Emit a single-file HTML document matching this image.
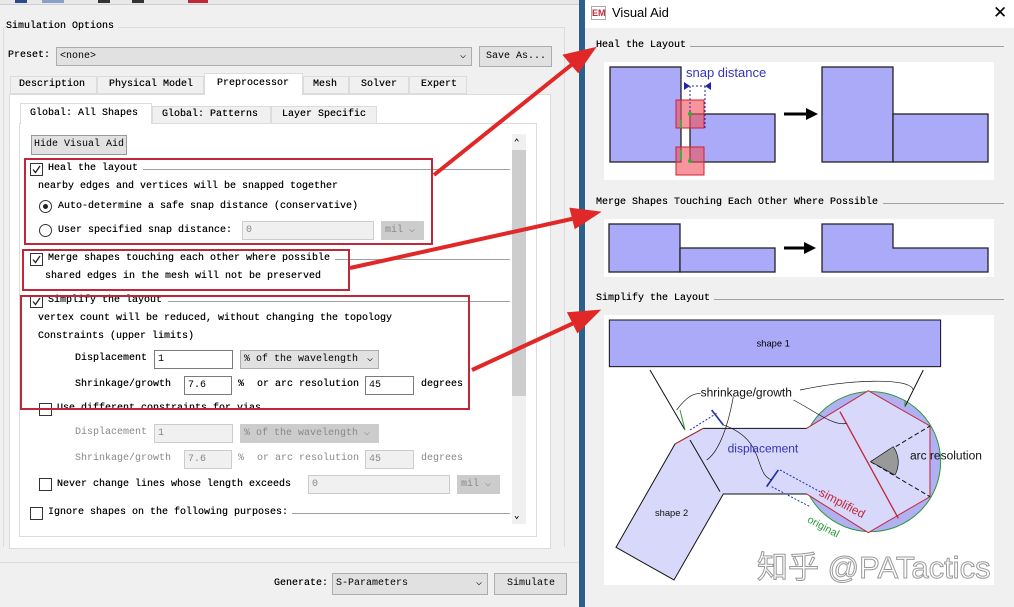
<!DOCTYPE html>
<html><head><meta charset="utf-8"><style>
body{margin:0;width:1014px;height:607px;overflow:hidden;background:#f0f0f0;font-family:"Liberation Mono","Noto Serif CJK SC",monospace;font-size:10px;color:#000;position:relative}
.a{position:absolute;white-space:nowrap}
.t{position:absolute;white-space:nowrap;line-height:12px;text-shadow:0 0 0.3px #000}
.box{position:absolute;box-sizing:border-box}
.cb{position:absolute;width:13px;height:13px;border:1px solid #333;background:#fff;box-sizing:border-box}
.rd{position:absolute;width:13px;height:13px;border:1px solid #333;border-radius:50%;background:#fff;box-sizing:border-box}
.in{position:absolute;box-sizing:border-box;border:1px solid #7a7a7a;background:#fff;padding-left:3px;line-height:17px}
.dis{border-color:#ccc;background:#f0f0f0;color:#888}
.cmb{position:absolute;box-sizing:border-box;border:1px solid #adadad;background:#e1e1e1;padding-left:3px;line-height:17px}
.g{color:#888;text-shadow:none}
.ln{position:absolute;height:1px;background:#a0a0a0}
.red{position:absolute;box-sizing:border-box;border:2px solid #c0283a}
.ck{position:absolute;width:13px;height:13px}
</style></head><body>
<div class="box" style="left:0;top:0;width:579px;height:607px;background:#f0f0f0"></div>
<div class="box" style="left:0;top:0;width:579px;height:5px;background:#e8e8e8;border-bottom:1px solid #cfcfcf"></div>
<div class="box" style="left:15px;top:0;width:12px;height:3px;background:#2a4a8a"></div>
<div class="box" style="left:42px;top:0;width:22px;height:3px;background:#8aa0c8"></div>
<div class="box" style="left:98px;top:0;width:12px;height:3px;background:#333"></div>
<div class="box" style="left:132px;top:0;width:12px;height:3px;background:#333"></div>
<div class="box" style="left:188px;top:0;width:20px;height:3px;background:#c0283a"></div>
<div class="box" style="left:3px;top:27px;width:562px;height:520px;border:1px solid #dcdcdc;border-bottom:none"></div>
<div class="t" style="left:6px;top:21px;background:#f0f0f0;padding-right:4px">Simulation Options</div>
<div class="t" style="left:8px;top:50px">Preset:</div>
<div class="cmb" style="left:56px;top:47px;width:416px;height:19px">&lt;none&gt;<span class="a" style="right:5px;top:0">⌵</span></div>
<div class="cmb" style="left:479px;top:46px;width:73px;height:21px;line-height:19px;padding-left:6px">Save As...</div>
<div class="box" style="left:9px;top:94px;width:542px;height:455px;border:1px solid #dcdcdc;background:#fff"></div>
<div class="box" style="left:10px;top:76px;width:87px;height:18px;border:1px solid #dcdcdc;background:#f0f0f0"></div><div class="t" style="left:19px;top:79px">Description</div>
<div class="box" style="left:97px;top:76px;width:107px;height:18px;border:1px solid #dcdcdc;background:#f0f0f0"></div><div class="t" style="left:109px;top:79px">Physical Model</div>
<div class="box" style="left:204px;top:73px;width:99px;height:22px;border:1px solid #dcdcdc;border-bottom:none;background:#fff"></div><div class="t" style="left:217px;top:78px">Preprocessor</div>
<div class="box" style="left:303px;top:76px;width:46px;height:18px;border:1px solid #dcdcdc;background:#f0f0f0"></div><div class="t" style="left:313px;top:79px">Mesh</div>
<div class="box" style="left:349px;top:76px;width:60px;height:18px;border:1px solid #dcdcdc;background:#f0f0f0"></div><div class="t" style="left:361px;top:79px">Solver</div>
<div class="box" style="left:409px;top:76px;width:58px;height:18px;border:1px solid #dcdcdc;background:#f0f0f0"></div><div class="t" style="left:421px;top:79px">Expert</div>
<div class="box" style="left:19px;top:123px;width:518px;height:414px;border:1px solid #dcdcdc;background:#fff"></div>
<div class="box" style="left:20px;top:103px;width:132px;height:21px;border:1px solid #dcdcdc;border-bottom:none;background:#fff"></div><div class="t" style="left:30px;top:108px">Global: All Shapes</div>
<div class="box" style="left:152px;top:106px;width:119px;height:18px;border:1px solid #dcdcdc;background:#f0f0f0"></div><div class="t" style="left:162px;top:109px">Global: Patterns</div>
<div class="box" style="left:271px;top:106px;width:106px;height:18px;border:1px solid #dcdcdc;background:#f0f0f0"></div><div class="t" style="left:282px;top:109px">Layer Specific</div>
<div class="cmb" style="left:31px;top:135px;width:96px;height:20px;line-height:18px;padding-left:2px;border-color:#999">Hide Visual Aid</div>
<div class="box" style="left:512px;top:134px;width:14px;height:390px;background:#f0f0f0"></div>
<div class="box" style="left:512px;top:150px;width:14px;height:246px;background:#cdcdcd"></div>
<div class="t" style="left:514px;top:137px;font-size:9px">⌃</div>
<div class="t" style="left:514px;top:510px;font-size:9px">⌄</div>
<div class="cb" style="left:30px;top:163px"></div><svg class="ck" style="left:30px;top:163px"><path d="M3 6.5L5.5 9.5 10 3" stroke="#222" stroke-width="1.3" fill="none"/></svg>
<div class="t" style="left:48px;top:163px">Heal the layout</div>
<div class="ln" style="left:143px;top:169px;width:367px"></div>
<div class="t" style="left:38px;top:181px">nearby edges and vertices will be snapped together</div>
<div class="rd" style="left:39px;top:200px"></div><div class="box" style="left:43px;top:204px;width:5px;height:5px;border-radius:50%;background:#222"></div>
<div class="t" style="left:58px;top:201px">Auto-determine a safe snap distance (conservative)</div>
<div class="rd" style="left:39px;top:224px"></div>
<div class="t" style="left:58px;top:225px">User specified snap distance:</div>
<div class="in dis" style="left:242px;top:221px;width:132px;height:19px">0</div>
<div class="cmb g" style="left:381px;top:221px;width:43px;height:19px;background:#ccc;border-color:#ccc">mil ⌵</div>
<div class="cb" style="left:30px;top:253px"></div><svg class="ck" style="left:30px;top:253px"><path d="M3 6.5L5.5 9.5 10 3" stroke="#222" stroke-width="1.3" fill="none"/></svg>
<div class="t" style="left:48px;top:253px">Merge shapes touching each other where possible</div>
<div class="ln" style="left:335px;top:259px;width:175px"></div>
<div class="t" style="left:45px;top:271px">shared edges in the mesh will not be preserved</div>
<div class="cb" style="left:30px;top:295px"></div><svg class="ck" style="left:30px;top:295px"><path d="M3 6.5L5.5 9.5 10 3" stroke="#222" stroke-width="1.3" fill="none"/></svg>
<div class="t" style="left:48px;top:295px">Simplify the layout</div>
<div class="ln" style="left:168px;top:301px;width:342px"></div>
<div class="t" style="left:38px;top:313px">vertex count will be reduced, without changing the topology</div>
<div class="t" style="left:38px;top:331px">Constraints (upper limits)</div>
<div class="t" style="left:75px;top:353px">Displacement</div>
<div class="in" style="left:154px;top:350px;width:79px;height:19px">1</div>
<div class="cmb" style="left:240px;top:350px;width:139px;height:19px">% of the wavelength <span class="a" style="right:5px;top:0">⌵</span></div>
<div class="t" style="left:75px;top:379px">Shrinkage/growth</div>
<div class="in" style="left:184px;top:376px;width:48px;height:19px">7.6</div>
<div class="t" style="left:238px;top:379px">%</div>
<div class="t" style="left:257px;top:379px">or arc resolution</div>
<div class="in" style="left:365px;top:376px;width:49px;height:19px">45</div>
<div class="t" style="left:421px;top:379px">degrees</div>
<div class="cb" style="left:39px;top:403px"></div>
<div class="t" style="left:57px;top:403px">Use different constraints for vias</div>
<div class="t g" style="left:75px;top:427px">Displacement</div>
<div class="in dis" style="left:154px;top:424px;width:79px;height:19px">1</div>
<div class="cmb g" style="left:240px;top:424px;width:139px;height:19px;background:#ccc;border-color:#ccc">% of the wavelength ⌵</div>
<div class="t g" style="left:75px;top:453px">Shrinkage/growth</div>
<div class="in dis" style="left:184px;top:450px;width:48px;height:19px">7.6</div>
<div class="t g" style="left:238px;top:453px">%</div>
<div class="t g" style="left:257px;top:453px">or arc resolution</div>
<div class="in dis" style="left:365px;top:450px;width:49px;height:19px">45</div>
<div class="t g" style="left:421px;top:453px">degrees</div>
<div class="cb" style="left:39px;top:478px"></div>
<div class="t" style="left:57px;top:479px">Never change lines whose length exceeds</div>
<div class="in dis" style="left:308px;top:475px;width:142px;height:19px">0</div>
<div class="cmb g" style="left:457px;top:475px;width:43px;height:19px;background:#ccc;border-color:#ccc">mil ⌵</div>
<div class="cb" style="left:30px;top:507px"></div>
<div class="t" style="left:48px;top:507px">Ignore shapes on the following purposes:</div>
<div class="ln" style="left:292px;top:513px;width:218px"></div>
<div class="red" style="left:24px;top:158px;width:409px;height:87px"></div>
<div class="red" style="left:22px;top:249px;width:328px;height:42px"></div>
<div class="red" style="left:20px;top:295px;width:450px;height:115px"></div>
<div class="ln" style="left:0;top:562px;width:579px;background:#dcdcdc"></div>
<div class="t" style="left:274px;top:578px">Generate:</div>
<div class="cmb" style="left:332px;top:573px;width:156px;height:22px;line-height:20px">S-Parameters<span class="a" style="right:5px;top:0">⌵</span></div>
<div class="cmb" style="left:494px;top:573px;width:73px;height:22px;line-height:20px;padding-left:12px">Simulate</div>
<div class="box" style="left:579px;top:0;width:6px;height:607px;background:#2c5f8a"></div>
<div class="box" style="left:585px;top:0;width:429px;height:28px;background:#fff"></div>
<div class="box" style="left:591px;top:6px;width:15px;height:14px;border:1px solid #aaa;background:#fff;color:#c0283a;font:bold 9px 'Liberation Sans',sans-serif;line-height:12px;text-align:center">EM</div>
<div class="a" style="left:612px;top:5px;font:13px 'Liberation Sans',sans-serif">Visual Aid</div>
<div class="a" style="left:993px;top:3px;font:17px 'Liberation Sans',sans-serif">✕</div>
<div class="t" style="left:596px;top:40px">Heal the Layout</div><div class="ln" style="left:690px;top:46px;width:314px"></div>
<div class="t" style="left:596px;top:197px">Merge Shapes Touching Each Other Where Possible</div><div class="ln" style="left:883px;top:203px;width:121px"></div>
<div class="t" style="left:596px;top:293px">Simplify the Layout</div><div class="ln" style="left:714px;top:299px;width:290px"></div>
<svg class="a" style="left:0;top:0" width="1014" height="607" viewBox="0 0 1014 607" font-family="Liberation Sans, sans-serif">
<rect x="604" y="62" width="390" height="118" fill="#fff"/>
<rect x="610" y="67" width="71" height="95" fill="#aaaaf8" stroke="#222" stroke-width="1.3"/>
<rect x="690" y="114" width="85" height="48" fill="#aaaaf8" stroke="#222" stroke-width="1.3"/>
<line x1="690" y1="114" x2="690" y2="162" stroke="#222"/>
<rect x="676" y="100" width="28" height="28" fill="rgba(240,80,90,0.6)" stroke="#d02030"/>
<rect x="676" y="147" width="28" height="28" fill="rgba(240,80,90,0.6)" stroke="#d02030"/>
<path d="M681 120V128M681 150V160" stroke="#4a4" stroke-width="2"/>
<circle cx="690" cy="114" r="2" fill="#3a3"/><circle cx="690" cy="161" r="2" fill="#3a3"/>
<path d="M684 86H705M690 86V114M705 86V128" stroke="#22a" stroke-dasharray="2 2" fill="none"/>
<path d="M684 82L690 86 684 90ZM711 82L705 86 711 90Z" fill="#22a"/>
<text x="686" y="77" font-size="13" fill="#3333bb">snap distance</text>
<path d="M784 114H808" stroke="#000" stroke-width="3"/><path d="M806 108L818 114 806 120Z" fill="#000"/>
<rect x="822" y="67" width="71" height="95" fill="#aaaaf8" stroke="#222" stroke-width="1.3"/>
<rect x="893" y="114" width="95" height="48" fill="#aaaaf8" stroke="#222" stroke-width="1.3"/>
<rect x="604" y="219" width="390" height="58" fill="#fff"/>
<rect x="609" y="224" width="71" height="48" fill="#aaaaf8" stroke="#222" stroke-width="1.3"/>
<rect x="680" y="248" width="95" height="24" fill="#aaaaf8" stroke="#222" stroke-width="1.3"/>
<path d="M784 248H806" stroke="#000" stroke-width="3"/><path d="M804 242L816 248 804 254Z" fill="#000"/>
<path d="M822 224H893V248H988V272H822Z" fill="#aaaaf8" stroke="#222" stroke-width="1.3"/>
<rect x="604" y="315" width="390" height="270" fill="#fff"/>
<g transform="translate(580,300) scale(0.3333)">
<rect x="88" y="60" width="994" height="140" fill="#aaaaf8" stroke="#111" stroke-width="3"/>
<text x="530" y="140" font-size="28">shape 1</text>
<circle cx="872" cy="485" r="210" fill="#b0b0f2" stroke="#2a9a3a" stroke-width="3"/>
<path d="M108 742L285 432 370 385H680L865 272 1050 378V590L865 698 680 582H430L282 840Z" fill="#d8d8fa"/>
<path d="M680 385L865 272 1050 378V590L865 698 680 582" fill="none" stroke="#c0283a" stroke-width="3"/>
<path d="M680 385H370L285 432 108 742 282 840 430 582H680" fill="none" stroke="#111" stroke-width="3"/>
<path d="M285 432L370 385" stroke="#c0283a" stroke-width="3"/>
<path d="M872 485L1050 378M872 485L1050 590" stroke="#111" stroke-width="3" stroke-dasharray="14 8"/>
<path d="M872 485L940 440A80 80 0 0 1 945 525Z" fill="#999" stroke="#111" stroke-width="2"/>
<path d="M780 335L955 655" stroke="#c0283a" stroke-width="4"/>
<path d="M210 210L315 390M1030 210L975 320M330 420L420 575" stroke="#111" stroke-width="3"/>
<path d="M300 330L315 390M975 300L975 320" stroke="#2a9a3a" stroke-width="3"/>
<path d="M330 390L410 340M575 560L690 620M600 510L720 575" stroke="#2233aa" stroke-width="3" stroke-dasharray="6 5"/>
<path d="M395 330L430 375M560 560L595 510" stroke="#2233aa" stroke-width="5"/>
<path d="M290 330C320 290 340 280 362 280M660 270C800 240 990 230 1000 270M640 300C700 330 760 380 800 370M460 290C440 400 410 460 380 480M430 375C560 420 520 520 575 540" fill="none" stroke="#111" stroke-width="2"/>
<text x="362" y="290" font-size="36" fill="#111">shrinkage/growth</text>
<text x="443" y="457" font-size="36" fill="#3333bb">displacement</text>
<text x="990" y="478" font-size="36" fill="#111">arc resolution</text>
<text x="715" y="585" font-size="36" fill="#c0283a" transform="rotate(28 715 585)">simplified</text>
<text x="680" y="665" font-size="32" fill="#2a9a3a" transform="rotate(28 680 665)">original</text>
<text x="225" y="648" font-size="28" fill="#111">shape 2</text>
</g>
<text x="757" y="578" font-size="31" font-family="Liberation Sans, Noto Sans CJK SC, sans-serif" fill="#fff" stroke="#999" stroke-width="1">知乎 @PATactics</text>
<g stroke="#e02828" stroke-width="4" fill="#e02828">
<path d="M434 175L575 62"/><path d="M592 50L566 56 578 70Z"/>
<path d="M350 268L576 218"/><path d="M596 213L572 210 576 226Z"/>
<path d="M472 370L576 322"/><path d="M596 312L570 314 578 330Z"/>
</g>
</svg>
</body></html>
